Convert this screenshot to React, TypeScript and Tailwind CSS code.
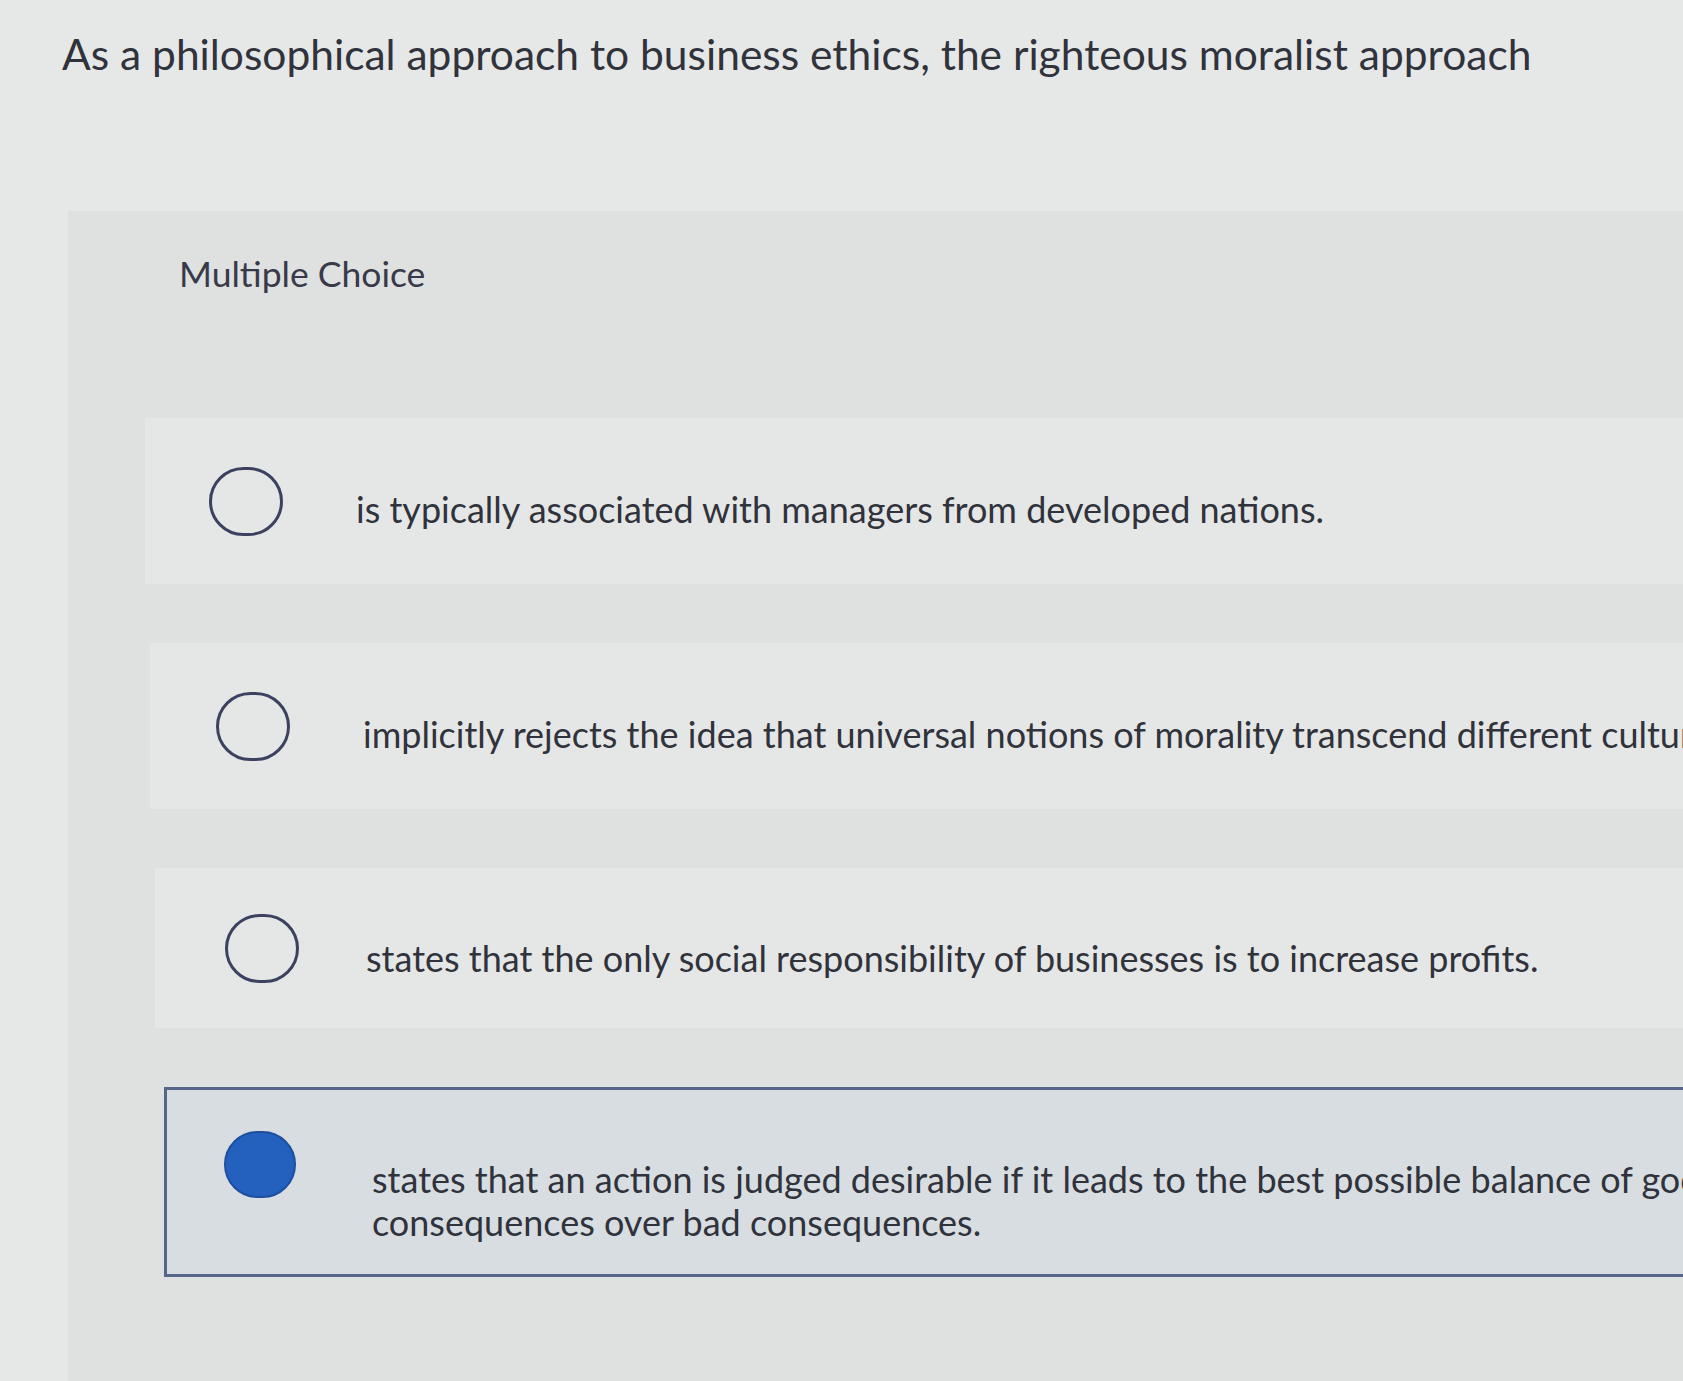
const options = [
  { id: 'a', text: 'is typically associated with managers from developed nations.' },
  { id: 'b', text: 'implicitly rejects the idea that universal notions of morality transcend different cultures.' },
  { id: 'c', text: 'states that the only social responsibility of businesses is to increase profits.' },
]

function Radio({ checked }: { checked?: boolean }) {
  if (checked) {
    return <div className="w-[72px] h-[67px] shrink-0 rounded-full bg-[#2460bd] border-2 border-[#1d4f9e]" />
  }
  return <div className="w-[74px] h-[69px] shrink-0 rounded-full border-[3px] border-[#3c4160]" />
}

export default function App() {
  return (
    <div
      className="w-[1683px] h-[1381px] overflow-hidden bg-[#e6e8e7] text-[#30333b]"
      style={{ fontFamily: 'Lato, "Open Sans", sans-serif' }}
    >
      <h1 className="pl-[62px] pt-[26px] text-[42.5px] leading-[56px] font-normal whitespace-nowrap">
        As a philosophical approach to business ethics, the righteous moralist approach
      </h1>

      <div className="ml-[68px] mt-[129px] w-[1800px] bg-[#dfe1e0] pb-[120px]">
        <div className="pl-[111px] pt-[40px] text-[35.5px] leading-[46px] text-[#383a4a]">Multiple Choice</div>

        <div className="mt-[121px] flex flex-col gap-[59px] pl-[77px]">
          {options.map((o, i) => (
            <div
              key={o.id}
              className={
                i === 0
                  ? 'flex items-center h-[166px] bg-[#e5e7e6] pl-[64px]'
                  : i === 1
                    ? 'flex items-center h-[166px] bg-[#e5e7e6] pl-[66px] ml-[5px]'
                    : 'flex items-center h-[160px] bg-[#e5e7e6] pl-[70px] ml-[10px]'
              }
            >
              <Radio />
              <div
                className={
                  i === 2
                    ? 'ml-[67px] pt-[20px] text-[36px] leading-[44px] whitespace-nowrap'
                    : 'ml-[73px] pt-[16px] text-[36px] leading-[44px] whitespace-nowrap'
                }
              >
                {o.text}
              </div>
            </div>
          ))}

          <div className="flex items-start h-[190px] ml-[19px] bg-[#d8dde2] border-y-[3px] border-l-[3px] border-[#56668a] pl-[57px]">
            <div className="pt-[41px]">
              <Radio checked />
            </div>
            <div className="ml-[76px] pt-[68px] text-[36px] leading-[43px] whitespace-nowrap">
              states that an action is judged desirable if it leads to the best possible balance of good
              <br />
              consequences over bad consequences.
            </div>
          </div>
        </div>
      </div>
    </div>
  )
}
